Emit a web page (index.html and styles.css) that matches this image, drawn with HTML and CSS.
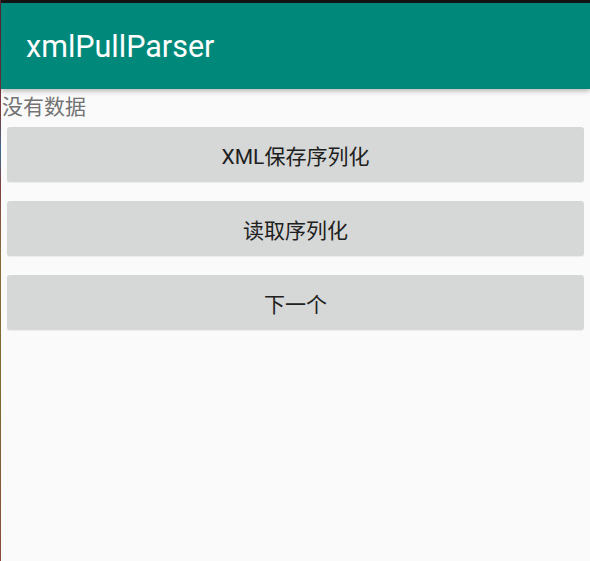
FILE: index.html
```html
<!DOCTYPE html>
<html lang="zh">
<head>
<meta charset="utf-8">
<title>xmlPullParser</title>
<link rel="stylesheet" href="styles.css">
</head>
<body>
<div class="screen">
  <div class="edge"></div>
  <div class="app">
    <div class="statusbar"></div>
    <header class="toolbar">
      <h1 class="title">xmlPullParser</h1>
    </header>
    <main class="content">
      <div class="status-text">没有数据</div>
      <div class="buttons">
        <button class="btn">XML保存序列化</button>
        <button class="btn">读取序列化</button>
        <button class="btn">下一个</button>
      </div>
    </main>
  </div>
</div>
</body>
</html>
```
FILE: styles.css
```css
html, body {
  margin: 0;
  padding: 0;
  width: 590px;
  height: 561px;
  overflow: hidden;
  background: #fafafa;
  font-family: Roboto, "Noto Sans CJK SC", sans-serif;
}

.screen {
  display: flex;
  width: 590px;
  height: 561px;
}

.edge {
  width: 1px;
  flex: none;
  background: linear-gradient(to bottom, #5a2a3a 0%, #7a3a40 20%, #3a6a90 27%, #804040 33%, #8a6a3a 45%, #7a6a30 70%, #8a4a3a 100%);
}

.app {
  flex: 1;
  display: flex;
  flex-direction: column;
  background: #fafafa;
}

.statusbar {
  height: 3px;
  background: #141414;
}

.toolbar {
  height: 86px;
  background: #00897b;
  display: flex;
  align-items: center;
  padding-left: 25px;
  box-shadow: 0 2px 5px rgba(0, 0, 0, 0.28);
  position: relative;
  z-index: 1;
}

.title {
  margin: 0;
  color: #ffffff;
  font-family: Roboto, sans-serif;
  font-weight: 400;
  font-size: 30.5px;
}

.content {
  display: flex;
  flex-direction: column;
}

.status-text {
  padding-left: 1px;
  margin-top: 2px;
  height: 28px;
  font-size: 21px;
  line-height: 28px;
  color: #737373;
  font-family: "Noto Sans CJK SC", sans-serif;
}

.buttons {
  display: flex;
  flex-direction: column;
  gap: 19px;
  padding: 8px 6px 0 6px;
}

.btn {
  height: 55px;
  border: none;
  border-radius: 3px;
  background: #d6d7d7;
  box-shadow: 0 1px 1px rgba(0, 0, 0, 0.06);
  color: #202020;
  font-family: Roboto, "Noto Sans CJK SC", sans-serif;
  font-size: 21px;
  padding: 0;
  cursor: pointer;
}
```
